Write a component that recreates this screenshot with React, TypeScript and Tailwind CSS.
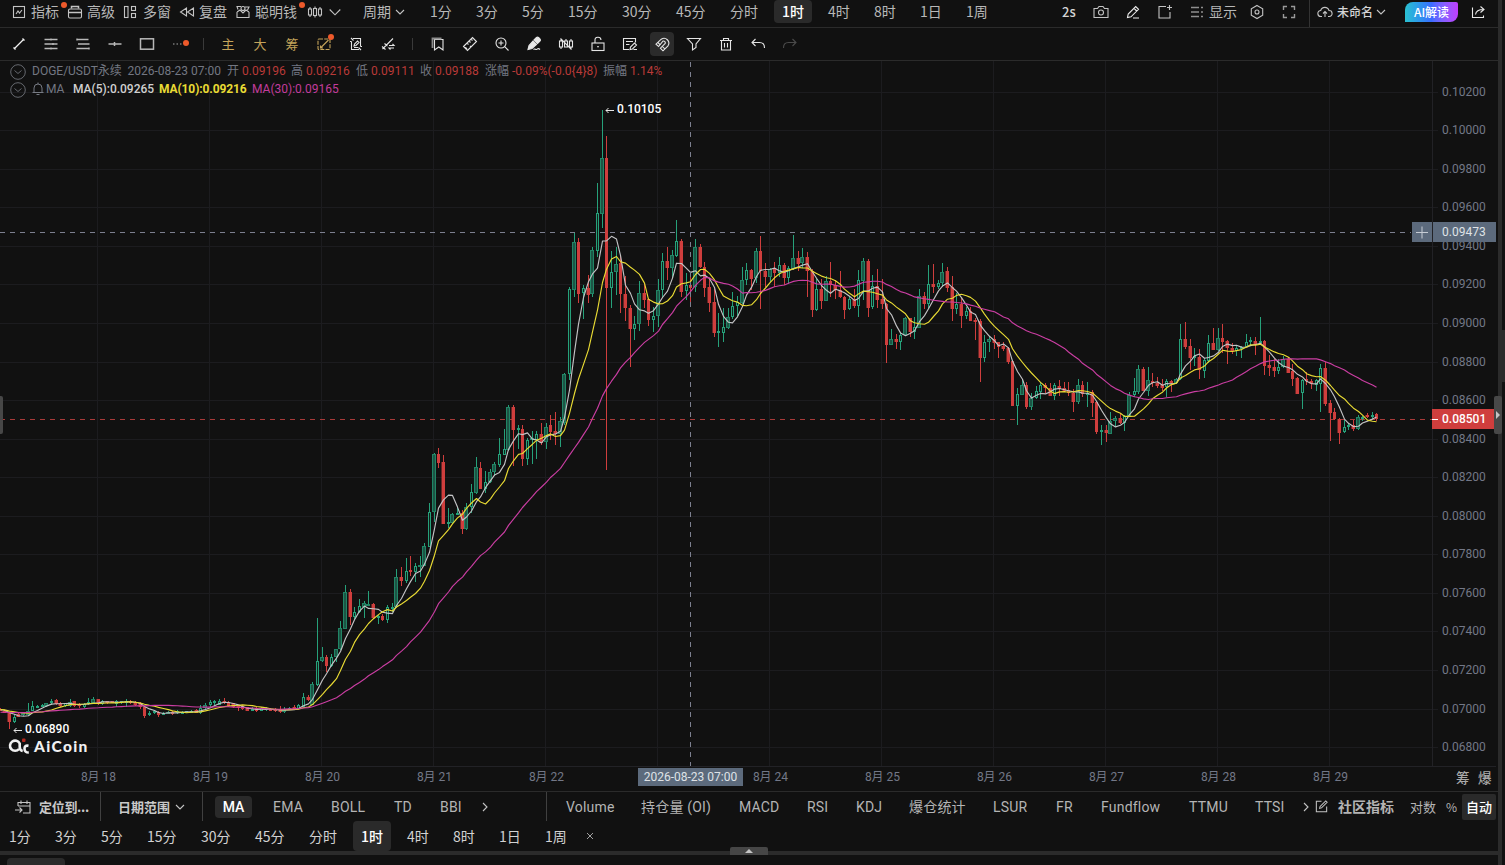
import React from "react";

/* ---------- candle data: kind high top bottom low (thirds of a pixel from base) ---------- */
type Segment = { first: number; base: number; rows: string };

const SEGMENTS: Segment[] = [
  {
    first: -21,
    base: 690,
    rows: `r 54 56 62 64;r 60 62 68 70;r 66 68 95 118;g 72 80 95 100;r 70 72 80 82;G 68 70 75 78;G 40 62 75 77;g 32 48 62 64;g 44 47 52 54;g 42 44 50 52;G 38 40 48 50;g 28 33 40 46;r 26 30 42 44;r 36 38 48 50;g 38 40 48 50;G 28 35 48 50;r 32 34 48 50;r 40 42 48 53;g 40 42 50 54;g 25 35 42 44;G 20 28 38 40;r 26 28 40 44;g 30 34 42 44;r 32 34 40 42;r 33 34 38 40;g 30 34 42 50;g 32 34 40 42;g 28 32 40 52;r 30 33 40 42;r 32 36 45 47;r 36 40 52 56;r 50 52 78 84;g 64 68 75 78;g 60 64 70 72;r 63 65 75 82;g 66 68 74 76;G 62 66 70 72;r 64 66 70 76;g 60 64 69 71;g 62 65 69 71;g 62 64 68 70;g 60 63 68 70;r 58 61 68 70;g 46 54 69 71;G 38 44 55 58;g 30 36 45 50;g 30 34 38 48;g 28 33 44 46;r 24 32 36 42;r 32 36 48 50;r 38 40 52 54;r 44 46 55 62;r 46 49 56 60;r 50 52 62 64;g 52 56 62 64;r 52 54 62 66;g 52 54 62 64;g 52 55 60 62;r 54 56 60 62;r 55 58 64 66;r 48 56 66 68;G 52 56 66 68;g 50 53 58 60;r 46 52 58 60;g 42 46 56 58`,
  },
  {
    first: 44,
    base: 420,
    rows: `g 820 832 860 862;r 826 832 840 843;G 785 793 856 856;g 595 724 794 797;G 680 711 724 726;r 706 711 738 756;g 702 710 738 740;G 686 688 710 725;G 602 625 688 690;G 496 517 628 628;r 507 516 590 614;g 560 577 590 600;g 537 558 577 580;G 543 549 562 595;G 513 552 554 556;r 550 552 594 596;g 585 588 592 611;r 583 587 600 603;g 556 562 600 608;g 550 560 563 575;G 448 472 562 565;r 442 471 483 497;g 413 454 483 490;r 408 450 455 468;g 430 438 455 485;G 408 435 439 470;G 370 379 437 438;g 250 277 380 382;G 98 103 277 305;r 83 103 128 145;r 105 127 311 312;g 265 307 311 325;G 278 282 308 312;g 262 278 284 286;r 270 278 326 341;G 248 262 328 330;g 191 217 262 280;G 112 142 219 222;r 127 144 207 208;g 152 187 206 218;G 148 157 187 188;G 125 133 155 168;g 53 102 134 140;g 26 87 104 106;G -44 -38 90 92;r -44 -38 30 139;g 14 24 30 87;r 14 28 116 137;g 55 61 116 134`,
  },
  {
    first: 93,
    base: 90,
    rows: `G 1023 1045 1050 1122;g 1024 1033 1050 1107;r 1000 1033 1060 1066;G 998 1010 1057 1078;r 975 1006 1025 1050;r 967 1022 1032 1065;G 980 993 1032 1070;G 848 852 1000 1005;g 590 598 853 870;G 425 457 599 620;r 445 457 611 638;g 585 595 610 688;r 556 593 614 640;G 472 481 613 622;g 280 370 482 500;G 60 205 371 415;r 138 205 594 1140;g 482 545 593 655;G 472 522 545 616;r 494 519 613 668;r 559 613 655 692;r 645 655 716 830;g 678 703 716 750;G 574 610 703 722;r 580 610 630 654;r 625 627 690 707;g 650 678 690 725;G 568 601 679 710;g 490 514 601 625;r 470 514 533 570;G 480 496 533 565;g 390 454 497 502;r 448 454 606 622;g 548 586 604 630;r 555 586 594 635;G 447 472 592 605;r 463 472 530 533;r 517 530 594 622;r 568 592 638 667;r 598 636 728 740;g 670 724 728 772`,
  },
  {
    first: 134,
    base: 210,
    rows: `g 293 352 368 396;G 295 322 353 358;g 247 287 322 328;g 257 277 288 318;G 170 211 280 282;g 160 180 211 226;r 177 180 206 240;G 114 124 205 220;r 78 124 182 297;r 160 182 200 232;G 173 176 200 215;r 155 177 190 230;g 141 166 188 200;r 160 166 203 226;g 168 175 203 222;G 76 145 176 180;r 123 144 162 182;G 115 142 160 175;r 127 142 182 262;r 178 182 299 320;g 203 238 301 303;r 208 237 272 297;G 198 214 272 273;r 156 213 226 262;r 209 226 240 266;r 184 240 261 263;r 257 261 299 326;g 257 268 297 300;r 238 268 288 293;g 180 211 287 321;G 144 154 212 270;r 147 153 293 320;g 196 229 292 297;r 177 229 269 293;r 207 267 282 297;r 280 283 404 459;G 357 388 404 406;r 373 388 395 417;g 366 374 395 420;G 322 325 374 376;r 325 325 366 380;g 320 352 366 387;G 236 259 353 355;r 247 259 282 297;g 164 223 281 297;r 163 222 231 250;g 210 219 230 236;G 160 187 220 230;r 170 184 233 247;r 198 232 296 332;g 250 281 296 312;r 263 281 317 353`,
  },
  {
    first: 186,
    base: 270,
    rows: `g 111 123 137 147;r 112 123 152 154;r 143 150 155 210;r 147 152 263 335;g 195 217 263 275;G 198 208 217 247;r 194 208 218 237;r 215 216 230 264;r 216 228 237 242;r 230 235 275 282;r 270 274 407 407;g 353 373 407 464;G 330 346 374 376;r 335 345 410 417;G 370 385 410 421;g 347 364 385 387;g 336 346 365 387;r 339 345 353 370;r 340 355 377 378;g 340 346 377 391;r 330 347 356 378;r 336 355 364 367;r 335 359 368 377;r 358 368 395 425;G 328 346 397 403;r 332 346 373 382;g 337 368 372 410;r 361 367 398 440;r 392 397 485 491;g 465 481 485 524;r 465 481 490 517;G 427 453 491 492;G 437 445 453 472;r 428 443 460 462;g 434 438 460 483;G 366 375 438 440;g 324 364 376 382;G 286 298 366 373;r 290 298 362 363;G 292 331 362 378;r 308 333 337 350;r 320 340 347 353;r 326 344 353 364;g 328 334 352 381;r 329 332 338 366;G 324 328 338 340`,
  },
  {
    first: 232,
    base: 300,
    rows: `g 72 118 238 240;r 67 118 140 147;r 116 139 173 210;g 143 169 173 198;r 147 171 210 237;g 173 181 212 233;g 105 129 182 188;r 85 129 149 150;G 85 114 150 152;r 72 115 125 160;r 120 124 144 192;r 130 144 152 162;g 136 144 153 168;g 138 141 145 173;g 103 127 141 142;g 111 120 127 135;r 111 124 136 165;g 51 124 130 132;r 121 123 197 224;r 166 195 204 227;r 176 201 212 231;g 178 201 212 223;G 168 178 201 203;r 172 178 218 219;r 192 213 236 257;r 231 234 281 282;g 238 241 280 326;r 215 237 243 255;r 237 243 253 267;g 236 240 255 272;g 191 205 252 335;r 186 205 311 318;r 300 310 338 423;r 325 336 358 360;r 355 357 398 431;g 360 381 397 399;g 370 374 381 390;r 360 374 388 393;G 345 352 388 390;g 347 350 354 362;r 338 345 352 355;g 336 344 352 358;r 340 343 358 362`,
  },
];

type Candle = { k: number; kind: string; h: number; t: number; b: number; l: number };

const CANDLES: Candle[] = SEGMENTS.flatMap((s) =>
  s.rows.split(";").map((row, i) => {
    const [kind, ...v] = row.trim().split(" ");
    const [h, t, b, l] = v.map((n) => s.base + Number(n) / 3);
    return { k: s.first + i, kind, h, t, b, l };
  }),
);

const px = (k: number) => Math.floor(98 + (14 / 3) * k);

const HISTORY = [...Array(20).fill(713.8), ...Array(10).fill(709.4)] as number[];
const CLOSES = [...HISTORY, ...CANDLES.map((c) => (c.kind === "r" ? c.b : c.t))];

function average(n: number) {
  return CANDLES.map((c, i) => {
    const end = i + HISTORY.length + 1;
    const sum = CLOSES.slice(end - n, end).reduce((a, v) => a + v, 0);
    return `${px(c.k) + 0.5},${(sum / n).toFixed(1)}`;
  }).join(" ");
}

const GRID_Y = [92, 130, 169, 207, 246, 284, 323, 362, 400, 439, 477, 516, 554, 593, 631, 670, 709, 747];
const DAYS = [18, 19, 20, 21, 22, 23, 24, 25, 26, 27, 28, 29];
const GREEN = "#26a17a";
const RED = "#cf3e3d";

function CandleShape({ c }: { c: Candle }) {
  const x = px(c.k);
  const h = Math.round(c.h);
  const l = Math.round(c.l);
  const t = Math.round(c.t);
  const b = Math.max(Math.round(c.b), t + 2);
  if (c.kind === "r") {
    return (
      <g fill={RED}>
        <rect x={x} y={h} width={1} height={Math.max(l - h, 1)} />
        <rect x={x - 1} y={t} width={3} height={b - t} />
        {c.k % 3 !== 1 && <rect x={x - 2} y={t} width={1} height={b - t} opacity={0.45} />}
      </g>
    );
  }
  const wide = c.kind === "G";
  const left = wide ? x - 2 : x - 1;
  const w = wide ? 4 : 3;
  return (
    <g>
      <rect x={x} y={h} width={1} height={Math.max(l - h, 1)} fill={GREEN} />
      <rect x={left} y={t} width={w} height={b - t} fill={wide ? "#218465" : GREEN} />
      {b - t > 2 && <rect x={left + 1} y={t + 1} width={w - 2} height={b - t - 2} fill={wide ? "#1c5545" : "#12211c"} />}
    </g>
  );
}

function Chart() {
  return (
    <svg width="1498" height="730" viewBox="0 61 1498 730" className="block" fontFamily="Roboto, 'Noto Sans CJK SC', sans-serif" fontSize="12">
      <g shapeRendering="crispEdges">
        {GRID_Y.map((y) => (
          <rect key={y} x={0} y={y} width={1438} height={1} fill="#1c1c1f" />
        ))}
        {DAYS.map((d, i) =>
          d === 23 ? null : <rect key={d} x={97 + i * 112} y={61} width={1} height={705} fill="#1c1c1f" />,
        )}
        <rect x={657} y={61} width={1} height={705} fill="#1c1c1f" />
        <rect x={1432} y={61} width={1} height={705} fill="#222226" />
        <rect x={0} y={766} width={1496} height={1} fill="#222226" />
        <line x1={0} x2={1432} y1={419.5} y2={419.5} stroke="#a83a39" strokeDasharray="5 5" />
        {CANDLES.map((c) => (
          <CandleShape key={c.k} c={c} />
        ))}
      </g>
      <g fill="none" strokeWidth="1.15" strokeLinejoin="round">
        <polyline points={average(5)} stroke="#c3c3c5" />
        <polyline points={average(10)} stroke="#e9db34" />
        <polyline points={average(30)} stroke="#cb3ea3" />
      </g>
      <g shapeRendering="crispEdges" stroke="#7d8090" strokeDasharray="5 5">
        <line x1={0} x2={1411} y1={232.5} y2={232.5} />
        <line x1={690.5} x2={690.5} y1={62} y2={766} />
      </g>
      <g fill="#737887">
        {GRID_Y.map((y, i) => (
          <text key={y} x={1442} y={y + 3.7}>
            {(0.102 - i * 0.002).toFixed(5)}
          </text>
        ))}
        {DAYS.map((d, i) =>
          d === 23 ? null : (
            <text key={d} x={98.5 + i * 112} y={781} textAnchor="middle">
              8月 {d}
            </text>
          ),
        )}
      </g>
      <rect x={1412} y={222} width={20} height={20} fill="#5c6a7c" />
      <rect x={1433} y={222} width={63} height={20} fill="#5c6a7c" />
      <path d="M1416 232.500h12M1422 226.500v12" stroke="#c6ccd4" />
      <text x={1442} y={236} fill="#dfe2e6">0.09473</text>
      <rect x={1432} y={409} width={62} height={20} fill={RED} />
      <path d="M1432 419.500h6" stroke="#fff" />
      <text x={1442} y={423} fill="#fff" fontWeight="500">0.08501</text>
      <rect x={638} y={768} width={105} height={18} fill="#5c6a7c" />
      <text x={690.5} y={781} textAnchor="middle" fill="#dfe2e6">2026-08-23 07:00</text>
      <g fill="#fff" fontWeight="500">
        <text x={617} y={113}>0.10105</text>
        <text x={25} y={733}>0.06890</text>
      </g>
      <path d="M606 110.500h8M608.500 108l-2.500 2.500 2.500 2.500M14 730.500h8M16.500 728l-2.500 2.500 2.500 2.500" stroke="#e6e6e6" fill="none" />
      <g fontSize="13.5" fill="#a9a9a9" fontWeight="500">
        <text x={1456} y={783}>筹</text>
        <text x={1478} y={783}>爆</text>
      </g>
      <g fill="none" stroke="#f1f1f1" strokeWidth="2.6">
        <path d="M19 749a5.100 5.100 0 1 1 .7-5.500v3.500q.2 3.500 3 4" />
        <path d="M28.500 745.800q-4 -.8 -4 3t4.300 3.700" />
      </g>
      <rect x={22} y={738.5} width={3.5} height={3.5} rx={1} fill="#b32820" />
      <text x={34} y={752.3} fontFamily="Lato, sans-serif" fontWeight="900" fontSize="15.5" letterSpacing="1.35" fill="#f1f1f1">AiCoin</text>
    </svg>
  );
}

/* ---------- icons ---------- */
function Icon({ children, size = 16, color = "#c4c4c4", sw = 1.1 }: { children: React.ReactNode; size?: number; color?: string; sw?: number }) {
  return (
    <svg width={size} height={size} viewBox="0 0 16 16" fill="none" stroke={color} strokeWidth={sw} className="block shrink-0">
      {children}
    </svg>
  );
}

const Chevron = ({ dir = "down" }: { dir?: "down" | "right" | "wide" }) => (
  <Icon>
    {dir === "down" && <path d="M4 6l4 4 4-4" />}
    {dir === "right" && <path d="M6 4l4 4-4 4" />}
    {dir === "wide" && <path d="M2.700 5.500L8 10.800l5.300-5.300" />}
  </Icon>
);

const I = {
  indicator: <><rect x="2.500" y="2.500" width="11" height="11" /><path d="M5 10L7 7l1.500 2 2.500-3" /></>,
  briefcase: <><rect x="1.500" y="5" width="13" height="9" rx="1.500" /><path d="M4.500 4.500V2.500h7v2M1.500 8.500h13" strokeWidth="1.500" /></>,
  windows: <><rect x="1.500" y="2.500" width="3.500" height="11" /><rect x="8.500" y="2.500" width="4" height="4" /><rect x="8.500" y="9.500" width="4" height="4" /></>,
  rewind: <path d="M7.500 4v8L1.500 8zM14.500 4v8L8.500 8z" />,
  smart: <><path d="M6 2.500H2l1 3M10 3h4l-1.500 3M2 8v5.500h12V8M2 8l3-2 3 3 3-3 3 2" /><circle cx="8" cy="4.500" r="2" /></>,
  candles: <><rect x="1.500" y="5" width="3" height="6" /><rect x="6.500" y="4.500" width="3" height="7" /><rect x="11.500" y="5" width="3" height="6" /><path d="M3 3v2M3 11v2M8 2.500v2M8 11.500v2M13 3v2M13 11v2" /></>,
  camera: <><path d="M1 4.500h3.500l1.500-2h4l1.500 2H15V13.500H1z" /><circle cx="8" cy="8.500" r="2.500" /></>,
  pencil: <path d="M2.500 13.500l.7-3.500 7.500-7.500 2.800 2.800L6 12.800zM9 4.300l2.700 2.700M8 14h6" />,
  note: <path d="M9 2.500H2v11.500h11V8M12.500 1v5M10 3.500h5" />,
  list: <path d="M2 3.500h8M12 3.500h2M2 8h8M12 8h2M2 12.500h8M12 12.500h2" strokeWidth="1.400" />,
  hex: <><path d="M8 1.500l5.700 3.200v6.600L8 14.500l-5.700-3.200V4.700z" /><circle cx="8" cy="8" r="2" /></>,
  full: <path d="M2.500 6V2.500H6M10 2.500h3.500V6M13.500 10v3.500H10M6 13.500H2.500V10" strokeWidth="1.400" />,
  cloud: <path d="M5 12.500H4a3 3 0 0 1-.3-6A4.300 4.300 0 0 1 12 6.500a3 3 0 0 1 .2 6H11M8 13V7.500M6 9.500l2-2 2 2" />,
  share: <path d="M2.500 3.500v10h11v-2M5.500 10.500c.5-3.500 3-5 8-5M10.500 2.500l3.500 3-3.500 3" />,
  line: <path d="M3.500 12.500l9-9M2.500 11.500l2 2M11.500 2.500l2 2" strokeWidth="1.300" />,
  parallel: <path d="M1.500 3.500h13M1.500 8h13M1.500 12.500h13M8 2.500v2M10 7v2M8 11.500v2" strokeWidth="1.400" />,
  fib: <path d="M1.500 3.500h12M3 8h11.500M1.500 12.500h13M2 2.500v2M14 11.500v2" strokeWidth="1.400" />,
  hline: <path d="M1.500 8h13M7.500 6v4" strokeWidth="1.500" />,
  rect: <rect x="1.500" y="2.800" width="13" height="10.400" strokeWidth="1.500" />,
  measure: <><rect x="2" y="3" width="12" height="10.500" rx="1" strokeDasharray="4 1.200" /><path d="M4.500 12l8-8M4.500 9.500v2.500h2.500" /></>,
  refresh: <><path d="M5 2.500h7.500v8M11 13.500H3.500v-8M3 2l2.500 2.500M13 14l-2.500-2.500M3.500 5.500H2M12.500 10.500H14" /><path d="M6 10l.5-2 3-3 1.500 1.500-3 3zM6 11.500h4" /></>,
  swap: <path d="M2.500 13l10.500-10.500M2 10.500l3.500 3M4.500 7.500l3 2.500M9 9.500h5l-1.500-1.500M14 12h-5l1.500 1.500" />,
  bookmark: <><path d="M4.500 3.500h8.500v10.500l-4.200-3-4.300 3z" /><path d="M2.500 12V2.500h9" strokeWidth="1.800" stroke="#8c8c8c" /></>,
  ruler: <path d="M1.500 10.500l9-9 4 4-9 9zM5 7l1.500 1.500M7 5l1.500 1.500M9 3l1.500 1.500M3.500 11.500L5 13M8 10l1 1" />,
  zoom: <><circle cx="7" cy="7" r="5" /><path d="M7 4.500v5M4.500 7h5M10.700 10.700L14.500 14.500" /></>,
  brush: <><path d="M2 13.500l1-4 4-4.500 3.500 3.500-4.500 4zM8 4l2.500-2.500a1.500 1.500 0 0 1 2 0l1.500 1.500a1.500 1.500 0 0 1 0 2L11.500 7.500z" fill="#e8e8e8" /><path d="M7.500 13.500c1.500-1.500 2 .5 3 0s1.500-2 3.500 0" /></>,
  noCandles: <><rect x="1.500" y="5" width="3" height="6" /><rect x="6.500" y="5" width="3" height="6" /><rect x="11.500" y="5" width="3" height="6" /><path d="M3 3v2M13 11v2M2.500 2.500l11 11M8 3v2M13 3v2M3 11v2" /></>,
  lock: <><rect x="2" y="7" width="12" height="7.500" /><path d="M5 7V4.500a3 3 0 0 1 6-.5M7 10.800h2" /></>,
  edit: <><path d="M13.500 6.500V2.500h-12v11H7M4 5.500h7M4 8.500h3.500" /><path d="M8 13.500l.5-2.500 4-4L14.500 9l-4 4zM11.500 13.500H15" /></>,
  magnet: <><path d="M2 8.200l5.300-5a4.800 4.800 0 0 1 6.700 6.600l-5 5-2.600-2.600 4.600-4.500a1.700 1.700 0 0 0-2.300-2.400L4.600 10.500z" /><path d="M3.800 6.500l2.500 2.400M8.200 10.400l2.600 2.500" /></>,
  funnel: <path d="M1.500 2.500h13L10 8v3.500L6.500 14V8z" />,
  trash: <path d="M2 4.500h12M5.500 4.500v-2h5v2M3.500 4.500v9.500h9V4.500M6.500 7v4.500M9.500 7v4.500" />,
  undo: <path d="M5.500 3L2 6.500 5.500 10M2 6.500h7.500c3.500 0 5 2 5 5.500" />,
  redo: <path d="M10.500 3L14 6.500 10.500 10M14 6.500H6.500c-3.500 0-5 2-5 5.500" />,
  calendar: <path d="M3 7V3.500h12v10.500H8M3 7h12M6 1.500v3.500M12 1.500v3.500M0 11h7M4.500 8.500L7 11 4.500 13.500" />,
  pen: <path d="M8 2.500H2.500v11h11V8M6 10l.5-2L12.500 2l1.500 1.500L8 9.500z" />,
};

const Dot = ({ cls }: { cls: string }) => <span className={`absolute size-[6px] rounded-full bg-[#ee5a2b] ${cls}`} />;

function MenuItem({ icon, label, width, dot }: { icon: React.ReactNode; label: string; width: string; dot?: boolean }) {
  return (
    <div className={`relative flex h-full shrink-0 items-center gap-[4px] ${width}`}>
      <Icon>{icon}</Icon>
      <span className="whitespace-nowrap pb-[2px]">{label}</span>
      {dot && <Dot cls="right-[-8px] top-[2px]" />}
    </div>
  );
}

const PERIODS: [string, string][] = [
  ["1分", "w-[46px]"], ["3分", "w-[46px]"], ["5分", "w-[46px]"], ["15分", "w-[54px]"], ["30分", "w-[54px]"], ["45分", "w-[54px]"],
  ["分时", "w-[52px]"], ["1时", "w-[46px]"], ["4时", "w-[46px]"], ["8时", "w-[46px]"], ["1日", "w-[46px]"], ["1周", "w-[46px]"],
];

function Periods({ active, height }: { active: string; height: string }) {
  return (
    <>
      {PERIODS.map(([t, w]) => (
        <div key={t} className={`flex h-full shrink-0 ${w}`}>
          <span
            className={
              t === "1时"
                ? `-ml-[8px] flex w-[38px] items-center justify-center rounded-[4px] bg-[#2a2a2a] pb-px font-medium text-white ${height}`
                : `flex items-center whitespace-nowrap pb-px ${active} ${height}`
            }
          >
            {t}
          </span>
        </div>
      ))}
    </>
  );
}

function TopBar() {
  return (
    <div className="flex h-[28px] shrink-0 items-start border-b border-[#2b2b2b] pl-[11px] text-[14px] text-[#b8b8b8]">
      <div className="flex h-[24px] shrink-0 items-center">
        <MenuItem icon={I.indicator} label="指标" width="w-[48px] mr-[8px]" dot />
        <MenuItem icon={I.briefcase} label="高级" width="w-[56px]" />
        <MenuItem icon={I.windows} label="多窗" width="w-[56px]" />
        <MenuItem icon={I.rewind} label="复盘" width="w-[56px]" />
        <MenuItem icon={I.smart} label="聪明钱" width="w-[62px] mr-[10px]" dot />
        <div className="flex w-[56px] items-center gap-[4px]">
          <Icon>{I.candles}</Icon>
          <Chevron dir="wide" />
        </div>
        <div className="flex w-[67px] items-center gap-[1px]">
          <span className="pb-[2px]">周期</span>
          <Chevron />
        </div>
        <Periods active="text-[#b8b8b8]" height="h-[23px]" />
      </div>
      <div className="ml-[50px] flex h-[24px] shrink-0 items-center">
        <span className="w-[31px] pb-px text-[13px] font-medium text-[#d5d5d5]">2s</span>
        <div className="flex w-[96px] items-center gap-[16px]">
          <Icon>{I.camera}</Icon>
          <Icon color="#eee">{I.pencil}</Icon>
          <Icon>{I.note}</Icon>
        </div>
        <div className="flex w-[60px] items-center gap-[4px]">
          <Icon color="#8f8f8f">{I.list}</Icon>
          <span className="pb-[2px]">显示</span>
        </div>
        <div className="flex w-[60px] items-center gap-[16px]">
          <Icon>{I.hex}</Icon>
          <Icon color="#9a9a9a">{I.full}</Icon>
        </div>
        <div className="flex h-[27px] items-center self-start border-l border-[#333] pb-[3px] pl-[7px]">
          <Icon>{I.cloud}</Icon>
          <span className="ml-[4px] text-[12px] font-medium text-[#d5d5d5]">未命名</span>
          <Chevron />
        </div>
        <span className="ml-[16px] flex h-[20px] w-[53px] items-center justify-center rounded-[8px] rounded-bl-none rounded-tr-[2px] bg-linear-to-r from-[#2bc0d0] via-[#3a6cff] to-[#c03cff] text-[12px] font-medium text-white">
          AI解读
        </span>
        <div className="ml-[12px]">
          <Icon color="#e8e8e8">{I.share}</Icon>
        </div>
      </div>
    </div>
  );
}

function Cell({ children, on }: { children: React.ReactNode; on?: boolean }) {
  return (
    <div className="flex w-8 shrink-0 items-center justify-center">
      <div className={on ? "flex size-6 items-center justify-center rounded-[4px] bg-[#2b2b2b]" : "relative flex size-6 items-center justify-center"}>{children}</div>
    </div>
  );
}

function DrawBar() {
  const W = "#e4e4e4";
  return (
    <div className="flex h-[33px] shrink-0 items-center border-b border-[#2b2b2b] pl-[3px] text-[13px]">
      {[I.line, I.parallel, I.fib, I.hline, I.rect].map((ic, i) => (
        <Cell key={i}><Icon color={i === 0 ? "#f2f2f2" : "#b8b8b8"}>{ic}</Icon></Cell>
      ))}
      <Cell>
        <Icon color="#aaa"><path d="M2 8h1.500M5.500 8h1.500M9 8h1.500" /></Icon>
        <Dot cls="right-[2px] top-[8px]" />
      </Cell>
      <div className="mx-[8px] h-3 w-px bg-[#3a3a3a]" />
      {["主", "大", "筹"].map((t) => (
        <Cell key={t}><span className="pb-px text-[#c4a35a]">{t}</span></Cell>
      ))}
      <Cell>
        <Icon color="#c4a35a">{I.measure}</Icon>
        <Dot cls="right-[2px] top-[2px]" />
      </Cell>
      <Cell><Icon color={W}>{I.refresh}</Icon></Cell>
      <Cell><Icon color={W}>{I.swap}</Icon></Cell>
      <div className="ml-[8px] mr-[9px] h-3 w-px bg-[#3a3a3a]" />
      {[I.bookmark, I.ruler, I.zoom, I.brush, I.noCandles, I.lock, I.edit].map((ic, i) => (
        <Cell key={i}><Icon color={W}>{ic}</Icon></Cell>
      ))}
      <Cell on><Icon color={W}>{I.magnet}</Icon></Cell>
      <Cell><Icon color={W}>{I.funnel}</Icon></Cell>
      <Cell><Icon color={W}>{I.trash}</Icon></Cell>
      <Cell><Icon color={W}>{I.undo}</Icon></Cell>
      <Cell><Icon color="#4a4a4a">{I.redo}</Icon></Cell>
    </div>
  );
}

const Round = () => (
  <Icon color="#66696f" sw={1}>
    <circle cx="8" cy="8" r="7.300" />
    <path d="M4.500 6.500L8 9.500l3.500-3" />
  </Icon>
);

const QUOTES: [string, string, string, string][] = [
  ["开", "0.09196", "w-[15px]", "w-[49px]"],
  ["高", "0.09216", "w-[15px]", "w-[50px]"],
  ["低", "0.09111", "w-[15px]", "w-[49px]"],
  ["收", "0.09188", "w-[15px]", "w-[50px]"],
  ["涨幅", "-0.09%(-0.0{4}8)", "w-[27px]", "w-[91px]"],
  ["振幅", "1.14%", "w-[27px]", "w-[40px]"],
];

function Legend() {
  return (
    <div className="absolute left-[10px] top-[1px] font-[Roboto,'Noto_Sans_CJK_SC',sans-serif] text-[12px] text-[#737782]">
      <div className="flex h-[18px] items-center">
        <span className="w-[22px] pt-[2px]"><Round /></span>
        <span className="w-[95.500px] whitespace-nowrap">DOGE/USDT永续</span>
        <span className="w-[99.500px] whitespace-nowrap">2026-08-23 07:00</span>
        {QUOTES.map(([n, v, a, b]) => (
          <React.Fragment key={n}>
            <span className={`whitespace-nowrap ${a}`}>{n}</span>
            <span className={`whitespace-nowrap text-[#b93a38] ${b}`}>{v}</span>
          </React.Fragment>
        ))}
      </div>
      <div className="flex h-[18px] items-center">
        <span className="w-[22px] pt-[2px]"><Round /></span>
        <svg width="12" height="14" viewBox="0 0 12 14" fill="none" stroke="#777b84" className="mr-[2px]">
          <path d="M.5 10.500h11M2 10.500V6a4 4 0 0 1 8 0v4.500M6 .5v1.500M4.500 12.500h3" />
        </svg>
        <span className="w-[27px]">MA</span>
        <span className="w-[86px] font-medium text-[#d0d0d0]">MA(5):0.09265</span>
        <span className="w-[93px] font-bold tracking-[-0.1px] text-[#e9db34]">MA(10):0.09216</span>
        <span className="text-[#c23c9c]">MA(30):0.09165</span>
      </div>
    </div>
  );
}

const MAIN: [string, string][] = [["EMA", "w-[58px]"], ["BOLL", "w-[63px]"], ["TD", "w-[46px]"], ["BBI", "w-[37px]"]];
const SUB: [string, string][] = [
  ["Volume", "w-[75px]"], ["持仓量 (OI)", "w-[98px]"], ["MACD", "w-[68px]"], ["RSI", "w-[49px]"], ["KDJ", "w-[53px]"], ["爆仓统计", "w-[84px]"],
  ["LSUR", "w-[63px]"], ["FR", "w-[45px]"], ["Fundflow", "w-[88px]"], ["TTMU", "w-[66px]"], ["TTSI", "w-[43px]"],
];

function IndicatorBar() {
  return (
    <div className="flex h-[29px] shrink-0 items-center text-[14px] text-[#b4b4b4]">
      <div className="flex h-full w-[101px] shrink-0 items-center border-r border-[#404040] pl-[15px] text-[13px] font-bold text-[#c8c8c8]">
        <Icon>{I.calendar}</Icon>
        <span className="ml-[8px] whitespace-nowrap tracking-[-0.3px]">定位到...</span>
      </div>
      <div className="flex h-full w-[102px] shrink-0 items-center border-r border-[#404040] pl-[17px] text-[13px] font-bold text-[#c8c8c8]">
        <span className="mr-[2px]">日期范围</span>
        <Chevron />
      </div>
      <div className="flex h-full w-[344px] shrink-0 items-center border-r border-[#404040] pl-[12px] font-[Roboto,'Noto_Sans_CJK_SC',sans-serif]">
        <span className="mr-[21px] flex h-[22px] w-[37px] items-center justify-center rounded-[4px] bg-[#2a2a2a] font-medium text-white">MA</span>
        {MAIN.map(([t, w]) => (
          <span key={t} className={`shrink-0 whitespace-nowrap tracking-[0.200px] ${w}`}>{t}</span>
        ))}
        <Chevron dir="right" />
      </div>
      <div className="flex shrink-0 items-center pl-[19px] font-[Roboto,'Noto_Sans_CJK_SC',sans-serif]">
        {SUB.map(([t, w]) => (
          <span key={t} className={`shrink-0 whitespace-nowrap tracking-[0.200px] ${w}`}>{t}</span>
        ))}
      </div>
      <div className="flex h-full items-center whitespace-nowrap">
        <Chevron dir="right" />
        <Icon size={15}>{I.pen}</Icon>
        <span className="ml-[9px] w-[72px] pb-px font-bold">社区指标</span>
        <span className="w-[36px] text-[13px]">对数</span>
        <span className="w-[16px] text-[12px]">%</span>
        <span className="flex h-[26px] w-[34px] items-center justify-center rounded-[2px] bg-[#2a2a2a] text-[13px] font-medium text-white">自动</span>
      </div>
    </div>
  );
}

export default function App() {
  return (
    <div className="flex h-[865px] w-[1505px] overflow-hidden bg-[#111111] font-['Noto_Sans_CJK_SC',sans-serif] leading-none">
      <main className="relative flex w-[1498px] shrink-0 flex-col">
        <TopBar />
        <DrawBar />
        <section className="relative h-[730px] shrink-0">
          <Chart />
          <Legend />
          <span className="absolute left-0 top-[335px] h-[38px] w-[3px] rounded-r-[2px] bg-[#474747]" />
        </section>
        <div className="h-px shrink-0 bg-[#2b2b2b]" />
        <IndicatorBar />
        <div className="flex h-[30px] shrink-0 items-center pl-[9px] text-[14px] text-[#d2d2d2]">
          <Periods active="text-[#d2d2d2]" height="h-[30px]" />
          <svg width="8" height="8" viewBox="0 0 8 8" stroke="#a0a0a0" className="-ml-[5px]"><path d="M1 1l6 6M7 1L1 7" /></svg>
        </div>
        <div className="h-[4px] shrink-0 bg-[#2b2b2b]" />
        <div className="flex flex-1 pl-[7px] pt-[3px]">
          <div className="w-[58px] rounded-t-[4px] bg-[#2b2b2b]" />
        </div>
        <div className="absolute left-[730px] top-[847px] flex h-[8px] w-[38px] items-center justify-center rounded-t-[2px] bg-[#464646]">
          <svg width="8" height="4"><path d="M0 4L4 0l4 4z" fill="#c4c4c4" /></svg>
        </div>
      </main>
      <aside className="relative flex w-[7px] shrink-0">
        <div className="w-[4px] bg-[#2b2b2b]" />
        <div className="mt-[330px] h-[52px] w-[3px] bg-[#2a2a2a]" />
        <div className="absolute -left-[4px] top-[396px] flex h-[38px] w-[8px] items-center justify-center rounded-[2px] bg-[#484848]">
          <svg width="4" height="8"><path d="M0 0l4 4-4 4z" fill="#c4c4c4" /></svg>
        </div>
      </aside>
    </div>
  );
}
